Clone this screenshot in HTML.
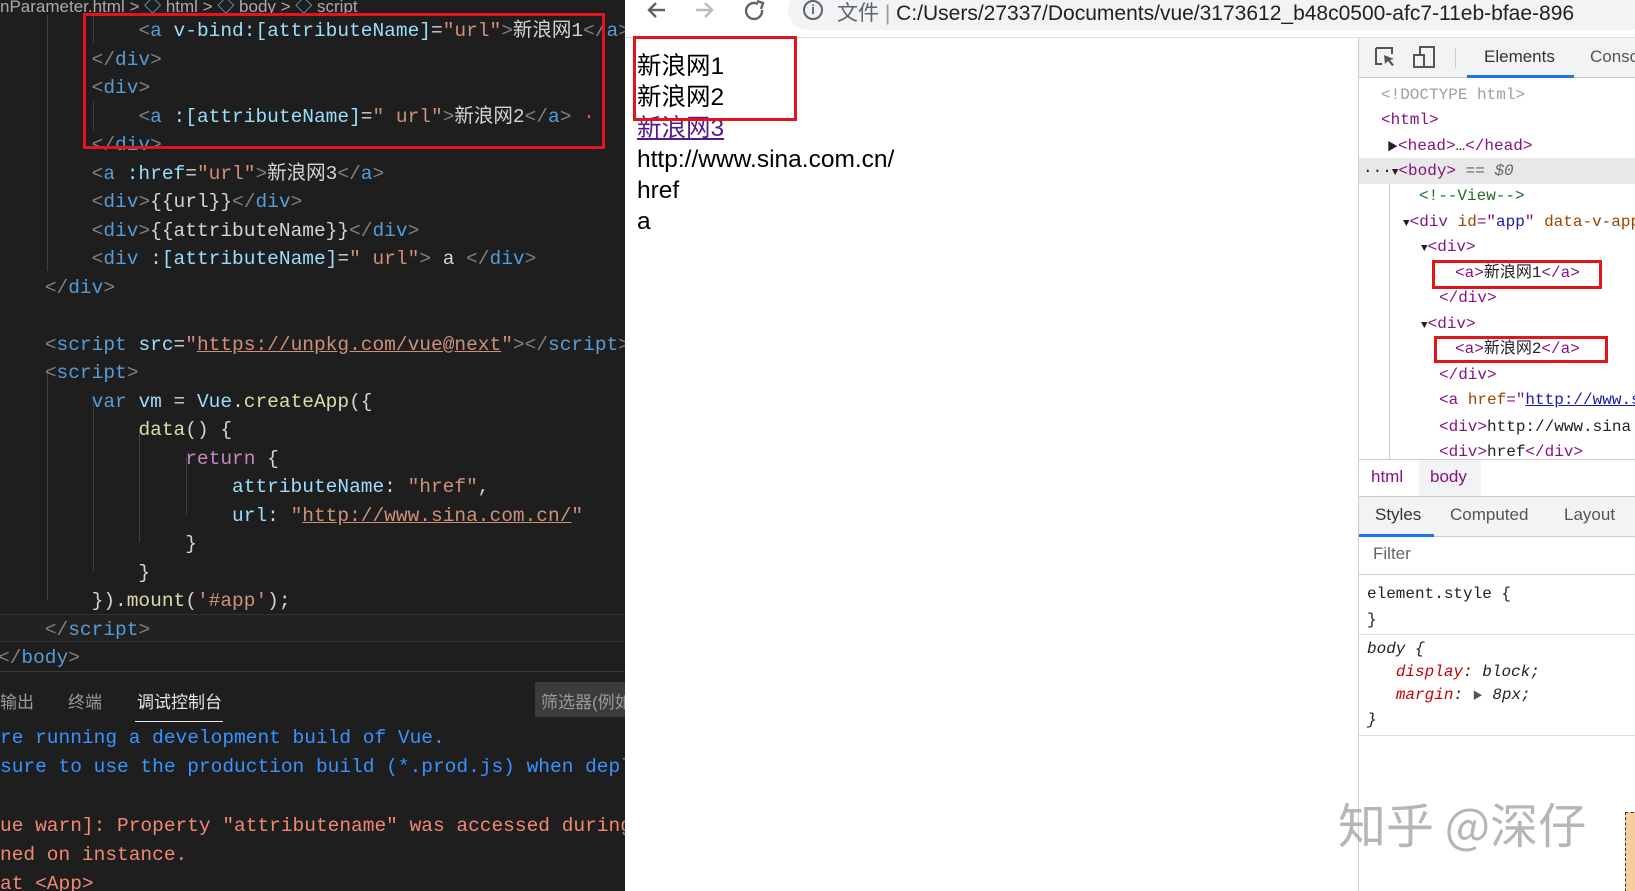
<!DOCTYPE html>
<html><head><meta charset="utf-8"><style>
*{margin:0;padding:0;box-sizing:border-box}
body{width:1635px;height:891px;overflow:hidden;position:relative;background:#fff;font-family:"Liberation Sans","Noto Sans CJK SC",sans-serif}
#ed{position:absolute;left:0;top:0;width:625px;height:891px;background:#1e1e1e;overflow:hidden}
.code{position:absolute;left:-2px;top:17px;font-family:"Liberation Mono","Noto Sans CJK SC",monospace;font-size:19.5px;line-height:28.5px;color:#d4d4d4;white-space:pre}
.b{color:#808080}.t{color:#569cd6}.at{color:#9cdcfe}.s{color:#ce9178}.k{color:#569cd6}.r{color:#c586c0}.f{color:#dcdcaa}.u{text-decoration:underline;text-decoration-color:#ce9178}
.g{position:absolute;width:1px;background:#404040}
#con{position:absolute;left:0;top:671px;width:625px;height:220px;border-top:1px solid #3c3c3c;background:#1e1e1e}
.tab{position:absolute;top:16px;font-size:17px;color:#999}
.cl{position:absolute;left:0;font-family:"Liberation Mono",monospace;font-size:19.5px;white-space:pre}
#br{position:absolute;left:625px;top:0;width:1010px;height:38px;background:#fff;border-bottom:1px solid #ddd}
#page{position:absolute;left:637px;top:51px;font-size:24.5px;line-height:31px;color:#000;font-family:"Liberation Sans","Noto Sans CJK SC",sans-serif}
#dt{position:absolute;left:1358px;top:38px;width:277px;height:853px;border-left:1px solid #ccc;background:#fff;overflow:hidden}
.dl{position:absolute;font-family:"Liberation Mono","Noto Sans CJK SC",monospace;font-size:16px;line-height:20px;white-space:pre;color:#222}
.tg{color:#881280}.an{color:#994500}.av{color:#1a1aa6}.gr{color:#a0a0a0}
.red{position:absolute;border:3px solid #e0161b}
</style></head><body>
<div id="ed">
<div style="position:absolute;left:0;top:-8px;font-size:17px;color:#aaa;white-space:nowrap">nParameter.html &gt; <span style="color:#75beff">◇</span> html &gt; <span style="color:#75beff">◇</span> body &gt; <span style="color:#75beff">◇</span> script</div>
<div class="g" style="left:47px;top:15px;height:256px"></div>
<div class="g" style="left:47px;top:372px;height:228px"></div>
<div class="g" style="left:93px;top:400px;height:171px"></div>
<div class="g" style="left:139px;top:428px;height:114px"></div>
<div class="g" style="left:186px;top:457px;height:57px"></div>
<div class="g" style="left:93px;top:15px;height:28px"></div>
<div class="g" style="left:93px;top:102px;height:28px"></div>
<div style="position:absolute;left:0;top:614px;width:625px;height:28px;border-top:1px solid #303030;border-bottom:1px solid #303030;background:#222"></div>
<div class="code"><span>            <span class="b">&lt;</span><span class="t">a</span> <span class="at">v-bind:[attributeName]</span>=<span class="s">"url"</span><span class="b">&gt;</span>新浪网1<span class="b">&lt;/</span><span class="t">a</span><span class="b">&gt;</span></span>
        <span class="b">&lt;/</span><span class="t">div</span><span class="b">&gt;</span>
        <span class="b">&lt;</span><span class="t">div</span><span class="b">&gt;</span>
            <span class="b">&lt;</span><span class="t">a</span> <span class="at">:[attributeName]</span>=<span class="s">" url"</span><span class="b">&gt;</span>新浪网2<span class="b">&lt;/</span><span class="t">a</span><span class="b">&gt;</span> <span style="color:#f14c4c">·</span>
        <span class="b">&lt;/</span><span class="t">div</span><span class="b">&gt;</span>
        <span class="b">&lt;</span><span class="t">a</span> <span class="at">:href</span>=<span class="s">"url"</span><span class="b">&gt;</span>新浪网3<span class="b">&lt;/</span><span class="t">a</span><span class="b">&gt;</span>
        <span class="b">&lt;</span><span class="t">div</span><span class="b">&gt;</span>{{url}}<span class="b">&lt;/</span><span class="t">div</span><span class="b">&gt;</span>
        <span class="b">&lt;</span><span class="t">div</span><span class="b">&gt;</span>{{attributeName}}<span class="b">&lt;/</span><span class="t">div</span><span class="b">&gt;</span>
        <span class="b">&lt;</span><span class="t">div</span> <span class="at">:[attributeName]</span>=<span class="s">" url"</span><span class="b">&gt;</span> a <span class="b">&lt;/</span><span class="t">div</span><span class="b">&gt;</span>
    <span class="b">&lt;/</span><span class="t">div</span><span class="b">&gt;</span>

    <span class="b">&lt;</span><span class="t">script</span> <span class="at">src</span>=<span class="s">"<span class="u">https://unpkg.com/vue@next</span>"</span><span class="b">&gt;&lt;/</span><span class="t">script</span><span class="b">&gt;</span>
    <span class="b">&lt;</span><span class="t">script</span><span class="b">&gt;</span>
        <span class="k">var</span> <span class="at">vm</span> = <span class="at">Vue</span>.<span class="f">createApp</span>({
            <span class="f">data</span>() {
                <span class="r">return</span> {
                    <span class="at">attributeName</span>: <span class="s">"href"</span>,
                    <span class="at">url</span>: <span class="s">"<span class="u">http://www.sina.com.cn/</span>"</span>
                }
            }
        }).<span class="f">mount</span>(<span class="s">'#app'</span>);
    <span class="b">&lt;/</span><span class="t">script</span><span class="b">&gt;</span>
<span class="b">&lt;/</span><span class="t">body</span><span class="b">&gt;</span></div>
<div class="red" style="left:83px;top:13px;width:522px;height:136px"></div>
<div id="con">
<div class="tab" style="left:0">输出</div>
<div class="tab" style="left:68px">终端</div>
<div class="tab" style="left:137px;color:#e7e7e7">调试控制台</div>
<div style="position:absolute;left:135px;top:49px;width:88px;height:1px;background:#e7e7e7"></div>
<div style="position:absolute;left:535px;top:10px;width:90px;height:35px;background:#3c3c3c;color:#999;font-size:17px;padding:6px 0 0 6px;white-space:nowrap;overflow:hidden">筛选器(例如</div>
<div class="cl" style="top:55px;color:#3794ff">re running a development build of Vue.</div>
<div class="cl" style="top:84px;color:#3794ff">sure to use the production build (*.prod.js) when deploying</div>
<div class="cl" style="top:143px;color:#f48771">ue warn]: Property "attributename" was accessed during render</div>
<div class="cl" style="top:172px;color:#f48771">ned on instance.</div>
<div class="cl" style="top:201px;color:#f48771">at &lt;App&gt;</div>
</div>
</div>

<div id="br">
<svg style="position:absolute;left:20px;top:0" width="130" height="24" viewBox="0 0 130 24"><g fill="none" stroke-width="2.4"><path d="M20 10H4M11 3L4 10l7 7" stroke="#5f6368"/><path d="M51 10h16M60 3l7 7-7 7" stroke="#bbb"/><path d="M113 4a8 8 0 1 0 4 6" stroke="#5f6368"/><path d="M112 1l6 2-2 6" stroke="#5f6368"/></g></svg>
<div style="position:absolute;left:163px;top:-10px;width:860px;height:40px;background:#f1f3f4;border-radius:20px"></div>
<div style="position:absolute;left:178px;top:0;width:20px;height:20px;border:2px solid #5f6368;border-radius:50%;font-size:13px;text-align:center;line-height:16px;color:#5f6368;font-weight:bold">i</div>
<div style="position:absolute;left:212px;top:-3px;font-size:21px;color:#5f6368;white-space:nowrap">文件 <span style="color:#999">|</span> <span style="color:#202124">C:/Users/27337/Documents/vue/3173612_b48c0500-afc7-11eb-bfae-896</span></div>
</div>

<div id="page">新浪网1<br>新浪网2<br><span style="color:#551a8b;text-decoration:underline">新浪网3</span><br>http://www.sina.com.cn/<br>href<br>a</div>
<div class="red" style="left:633px;top:36px;width:164px;height:85px"></div>

<div id="dt">
<div style="position:absolute;left:0;top:0;width:277px;height:40px;background:#f1f3f4;border-bottom:1px solid #ccc"></div>
<svg style="position:absolute;left:15px;top:8px" width="70" height="24"><path d="M2 2h16v6M2 2v16h6" fill="none" stroke="#555" stroke-width="2"/><path d="M10 9l10 4-4 1 4 5-2 1-4-5-3 3z" fill="#555"/><rect x="46" y="1" width="14" height="20" fill="none" stroke="#555" stroke-width="2"/><rect x="40" y="9" width="10" height="12" fill="#f1f3f4" stroke="#555" stroke-width="2"/></svg>
<div style="position:absolute;left:96px;top:10px;width:1px;height:20px;background:#ccc"></div>
<div style="position:absolute;left:125px;top:9px;font-size:17px;color:#333">Elements</div>
<div style="position:absolute;left:108px;top:37px;width:107px;height:3px;background:#1a73e8"></div>
<div style="position:absolute;left:231px;top:9px;font-size:17px;color:#555">Console</div>
<div style="position:absolute;left:0;top:120px;width:277px;height:26px;background:#e8e8e8"></div>
<div style="position:absolute;left:30px;top:146px;width:1px;height:280px;background:#ccc"></div>
<div class="dl" style="left:22px;top:47px"><span class="gr">&lt;!DOCTYPE html&gt;</span></div>
<div class="dl" style="left:22px;top:72px"><span class="tg">&lt;html&gt;</span></div>
<div class="dl" style="left:28px;top:98px"><span style="font-size:11px">▶</span><span class="tg">&lt;head&gt;</span>…<span class="tg">&lt;/head&gt;</span></div>
<div class="dl" style="left:4px;top:123px">···<span style="font-size:11px">▼</span><span class="tg">&lt;body&gt;</span> <i style="color:#666">== $0</i></div>
<div class="dl" style="left:60px;top:148px;color:#236e25">&lt;!--View--&gt;</div>
<div class="dl" style="left:44px;top:174px"><span style="font-size:11px">▼</span><span class="tg">&lt;div</span> <span class="an">id</span><span class="tg">="</span><span class="av">app</span><span class="tg">"</span> <span class="an">data-v-app</span></div>
<div class="dl" style="left:62px;top:199px"><span style="font-size:11px">▼</span><span class="tg">&lt;div&gt;</span></div>
<div class="dl" style="left:96px;top:225px"><span class="tg">&lt;a&gt;</span>新浪网1<span class="tg">&lt;/a&gt;</span></div>
<div class="dl" style="left:80px;top:250px"><span class="tg">&lt;/div&gt;</span></div>
<div class="dl" style="left:62px;top:276px"><span style="font-size:11px">▼</span><span class="tg">&lt;div&gt;</span></div>
<div class="dl" style="left:96px;top:301px"><span class="tg">&lt;a&gt;</span>新浪网2<span class="tg">&lt;/a&gt;</span></div>
<div class="dl" style="left:80px;top:327px"><span class="tg">&lt;/div&gt;</span></div>
<div class="dl" style="left:80px;top:352px"><span class="tg">&lt;a</span> <span class="an">href</span><span class="tg">="</span><span style="color:#1a1aa6;text-decoration:underline">http://www.sina</span></div>
<div class="dl" style="left:80px;top:379px"><span class="tg">&lt;div&gt;</span>http://www.sina</div>
<div class="dl" style="left:80px;top:404px"><span class="tg">&lt;div&gt;</span>href<span class="tg">&lt;/div&gt;</span></div>
<div class="red" style="left:73px;top:222px;width:170px;height:29px"></div>
<div class="red" style="left:75px;top:298px;width:174px;height:27px"></div>
<div style="position:absolute;left:0;top:421px;width:277px;height:38px;background:#fff;border-top:1px solid #ccc;border-bottom:1px solid #ccc"></div>
<div style="position:absolute;left:60px;top:422px;width:62px;height:36px;background:#f1f3f4"></div>
<div style="position:absolute;left:12px;top:429px;font-size:17px;color:#881280">html</div>
<div style="position:absolute;left:71px;top:429px;font-size:17px;color:#881280">body</div>
<div style="position:absolute;left:0;top:459px;width:277px;height:40px;background:#f1f3f4;border-bottom:1px solid #ccc"></div>
<div style="position:absolute;left:16px;top:467px;font-size:17px;color:#333">Styles</div>
<div style="position:absolute;left:0;top:496px;width:75px;height:3px;background:#1a73e8"></div>
<div style="position:absolute;left:91px;top:467px;font-size:17px;color:#555">Computed</div>
<div style="position:absolute;left:205px;top:467px;font-size:17px;color:#555">Layout</div>
<div style="position:absolute;left:8px;top:500px;width:269px;height:33px;background:#fff"></div>
<div style="position:absolute;left:14px;top:506px;font-size:17px;color:#666">Filter</div>
<div style="position:absolute;left:0;top:536px;width:277px;height:1px;background:#ccc"></div>
<div class="dl" style="left:8px;top:543px;line-height:26px">element.style {
}</div>
<div style="position:absolute;left:0;top:596px;width:277px;height:1px;background:#ddd"></div>
<div class="dl" style="left:8px;top:600px;font-style:italic;line-height:23px">body {
   <span style="color:#c80000">display</span>: block;
   <span style="color:#c80000">margin</span>: <span style="font-size:10px;font-style:normal;color:#555">▶</span> 8px;
}</div>
<div style="position:absolute;left:0;top:697px;width:277px;height:1px;background:#ddd"></div>
<div style="position:absolute;left:266px;top:774px;width:20px;height:90px;background:#f9cc9d;border:1px dashed #333"></div>
</div>
<div style="position:absolute;left:1338px;top:792px;font-size:48px;line-height:60px;color:#aaa;opacity:.85;white-space:nowrap;font-family:'Noto Sans CJK SC',sans-serif">知乎 @深仔</div>
</body></html>
